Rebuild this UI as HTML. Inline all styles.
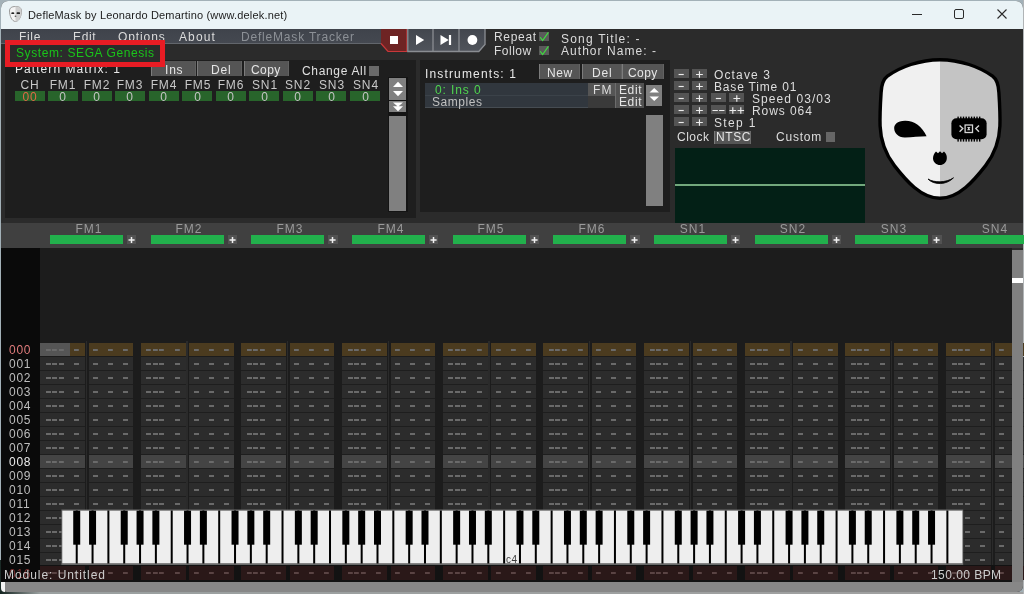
<!DOCTYPE html><html><head><meta charset="utf-8"><style>
*{margin:0;padding:0;box-sizing:border-box}
html,body{width:1024px;height:594px;overflow:hidden}
body{background:#a3b1b8;position:relative;font-family:"Liberation Sans",sans-serif}
div{position:absolute}
.t{white-space:pre;will-change:transform}
svg{position:absolute;overflow:visible}
</style></head><body>
<div style="left:0px;top:560px;width:10px;height:34px;background:linear-gradient(90deg,#1a2a26,#2a3a36);"></div>
<div style="left:0px;top:592px;width:1024px;height:2px;background:linear-gradient(90deg,#142420,#9aa0a0 40px,#a0a0a0);"></div>
<div style="left:1023px;top:0px;width:1px;height:594px;background:#b0b4b6;"></div>
<div style="left:1px;top:1px;width:1022px;height:591px;background:#2b2b2b;border-radius:7px 7px 6px 6px"></div>
<div style="left:1px;top:1px;width:1022px;height:28px;background:#eaf3f6;border-radius:7px 7px 0 0"></div>
<svg style="left:9px;top:6px" width="13" height="16" viewBox="0 0 13 16">
<path d="M6.5 0.5 C10.5 0.5 12.5 2 12.5 5 C12.5 10 10 15.5 6.5 15.5 C3 15.5 0.5 10 0.5 5 C0.5 2 2.5 0.5 6.5 0.5Z" fill="#f4f4f4" stroke="#9a9a9a" stroke-width="1"/>
<path d="M6.5 0.5 C10.5 0.5 12.5 2 12.5 5 C12.5 10 10 15.5 6.5 15.5Z" fill="#cfcfcf"/>
<ellipse cx="3.8" cy="7.2" rx="1.6" ry="0.9" fill="#222"/><rect x="7.6" y="6.3" width="3.4" height="1.8" rx="0.6" fill="#222"/>
<ellipse cx="6.5" cy="10.3" rx="0.9" ry="0.8" fill="#555"/></svg>
<div class="t" style="left:28px;top:8.79px;font-size:11px;line-height:12.65px;color:#1c1c1c;letter-spacing:0.17px;font-family:"Liberation Sans", sans-serif;">DefleMask by Leonardo Demartino (www.delek.net)</div>
<div style="left:912px;top:14px;width:10px;height:1px;background:#2a2a2a;"></div>
<div style="left:954px;top:9px;width:10px;height:10px;background:transparent;border:1px solid #2a2a2a;border-radius:2px"></div>
<svg style="left:997px;top:9px" width="10" height="10" viewBox="0 0 10 10"><path d="M0.5 0.5L9.5 9.5M9.5 0.5L0.5 9.5" stroke="#2a2a2a" stroke-width="1.1"/></svg>
<div style="left:1px;top:29px;width:380px;height:15px;background:linear-gradient(#3f434b,#454951);"></div>
<div style="left:1px;top:43px;width:380px;height:1px;background:#62666c;"></div>
<div class="t" style="left:19px;top:31.04px;font-size:12px;line-height:13.8px;color:#dcdcdc;letter-spacing:0.67px;font-family:"Liberation Sans", sans-serif;">File</div>
<div class="t" style="left:73px;top:31.04px;font-size:12px;line-height:13.8px;color:#dcdcdc;letter-spacing:0.67px;font-family:"Liberation Sans", sans-serif;">Edit</div>
<div class="t" style="left:118px;top:31.04px;font-size:12px;line-height:13.8px;color:#dcdcdc;letter-spacing:0.9px;font-family:"Liberation Sans", sans-serif;">Options</div>
<div class="t" style="left:178.6px;top:31.04px;font-size:12px;line-height:13.8px;color:#dcdcdc;letter-spacing:1.1px;font-family:"Liberation Sans", sans-serif;">About</div>
<div class="t" style="left:240.75px;top:31.04px;font-size:12px;line-height:13.8px;color:#8c9096;letter-spacing:0.81px;font-family:"Liberation Sans", sans-serif;">DefleMask Tracker</div>
<svg style="left:381px;top:29px" width="106" height="24" viewBox="0 0 106 24">
<path d="M0 0H26.3V23H7L0 15Z" fill="#6e2424"/>
<path d="M0 14.5L7 22.5H26V0" fill="none" stroke="#c8383a" stroke-width="1.2"/>
<rect x="9" y="7" width="8" height="8" fill="#fff"/>
<path d="M26.3 0H104.2V15.5L97.8 23H26.3Z" fill="url(#g1)"/>
<path d="M26.8 0V22.5H97.8L104 15.5V0M52 0V22.5M78 0V22.5" fill="none" stroke="#8a8d92" stroke-width="1.3"/>
<path d="M35 6V16L43.2 11Z" fill="#fff"/>
<path d="M59.5 6V16L67.7 11Z" fill="#fff"/><rect x="67.9" y="6" width="2.2" height="10" fill="#fff"/>
<circle cx="91.4" cy="11" r="4.9" fill="#fff"/>
<defs><linearGradient id="g1" x1="0" y1="0" x2="0" y2="1"><stop offset="0" stop-color="#42464e"/><stop offset="1" stop-color="#50545b"/></linearGradient></defs>
</svg>
<div class="t" style="left:493.5px;top:31.14px;font-size:12px;line-height:13.8px;color:#dcdcdc;letter-spacing:0.7px;font-family:"Liberation Sans", sans-serif;">Repeat</div>
<div class="t" style="left:493.5px;top:45.14px;font-size:12px;line-height:13.8px;color:#dcdcdc;letter-spacing:0.5px;font-family:"Liberation Sans", sans-serif;">Follow</div>
<div style="left:539.4px;top:32px;width:9.5px;height:9px;background:#5a5a5a;"></div>
<svg style="left:539px;top:31px" width="11" height="11" viewBox="0 0 11 11"><path d="M1.2 6.2L3.6 9.6L9.4 1.4" fill="none" stroke="#3ee03e" stroke-width="1.1"/></svg>
<div style="left:539.4px;top:46px;width:9.5px;height:9px;background:#5a5a5a;"></div>
<svg style="left:539px;top:45px" width="11" height="11" viewBox="0 0 11 11"><path d="M1.2 6.2L3.6 9.6L9.4 1.4" fill="none" stroke="#3ee03e" stroke-width="1.1"/></svg>
<div class="t" style="left:560.6px;top:32.64px;font-size:12px;line-height:13.8px;color:#dcdcdc;letter-spacing:1.21px;font-family:"Liberation Sans", sans-serif;">Song Title: -</div>
<div class="t" style="left:560.6px;top:45.14px;font-size:12px;line-height:13.8px;color:#dcdcdc;letter-spacing:1.04px;font-family:"Liberation Sans", sans-serif;">Author Name: -</div>
<div style="left:5px;top:60px;width:411px;height:157.5px;background:#1e1e1e;"></div>
<div class="t" style="left:14.6px;top:63.24px;font-size:12px;line-height:13.8px;color:#e8e8e8;letter-spacing:1.06px;font-family:"Liberation Sans", sans-serif;">Pattern Matrix: 1</div>
<div style="left:151px;top:61.3px;width:45px;height:15px;background:#555555;border-left:1px solid #7c7c7c;border-right:1px solid #626262"></div>
<div class="t" style="left:165px;top:63.94px;font-size:12px;line-height:13.8px;color:#e6e6e6;letter-spacing:0.8px;font-family:"Liberation Sans", sans-serif;">Ins</div>
<div style="left:197px;top:61.3px;width:45px;height:15px;background:#555555;border-left:1px solid #7c7c7c;border-right:1px solid #626262"></div>
<div class="t" style="left:211px;top:63.94px;font-size:12px;line-height:13.8px;color:#e6e6e6;letter-spacing:0.8px;font-family:"Liberation Sans", sans-serif;">Del</div>
<div style="left:243.5px;top:61.3px;width:45.5px;height:15px;background:#555555;border-left:1px solid #7c7c7c;border-right:1px solid #626262"></div>
<div class="t" style="left:250.5px;top:63.94px;font-size:12px;line-height:13.8px;color:#e6e6e6;letter-spacing:0.4px;font-family:"Liberation Sans", sans-serif;">Copy</div>
<div class="t" style="left:301.6px;top:64.74px;font-size:12px;line-height:13.8px;color:#e0e0e0;letter-spacing:0.67px;font-family:"Liberation Sans", sans-serif;">Change All</div>
<div style="left:369px;top:66px;width:9.5px;height:9.5px;background:#6a6a6a;"></div>
<div class="t" style="left:9.75px;top:78.64px;width:40px;text-align:center;font-size:12px;line-height:13.8px;color:#c8c8c8;letter-spacing:0.9px">CH</div>
<div style="left:14.8px;top:91.4px;width:29.8px;height:9.5px;background:#28642b;"></div>
<div class="t" style="left:9.75px;top:90.74px;width:40px;text-align:center;font-size:12px;line-height:13.8px;color:#e06848;letter-spacing:0.9px">00</div>
<div class="t" style="left:43.33px;top:78.64px;width:40px;text-align:center;font-size:12px;line-height:13.8px;color:#c8c8c8;letter-spacing:0.9px">FM1</div>
<div style="left:48.32px;top:91.4px;width:29.8px;height:9.5px;background:#28642b;"></div>
<div class="t" style="left:43.33px;top:90.74px;width:40px;text-align:center;font-size:12px;line-height:13.8px;color:#c4c4c4;letter-spacing:0.9px">0</div>
<div class="t" style="left:76.91px;top:78.64px;width:40px;text-align:center;font-size:12px;line-height:13.8px;color:#c8c8c8;letter-spacing:0.9px">FM2</div>
<div style="left:81.84px;top:91.4px;width:29.8px;height:9.5px;background:#28642b;"></div>
<div class="t" style="left:76.91px;top:90.74px;width:40px;text-align:center;font-size:12px;line-height:13.8px;color:#c4c4c4;letter-spacing:0.9px">0</div>
<div class="t" style="left:110.49px;top:78.64px;width:40px;text-align:center;font-size:12px;line-height:13.8px;color:#c8c8c8;letter-spacing:0.9px">FM3</div>
<div style="left:115.36px;top:91.4px;width:29.8px;height:9.5px;background:#28642b;"></div>
<div class="t" style="left:110.49px;top:90.74px;width:40px;text-align:center;font-size:12px;line-height:13.8px;color:#c4c4c4;letter-spacing:0.9px">0</div>
<div class="t" style="left:144.07px;top:78.64px;width:40px;text-align:center;font-size:12px;line-height:13.8px;color:#c8c8c8;letter-spacing:0.9px">FM4</div>
<div style="left:148.88px;top:91.4px;width:29.8px;height:9.5px;background:#28642b;"></div>
<div class="t" style="left:144.07px;top:90.74px;width:40px;text-align:center;font-size:12px;line-height:13.8px;color:#c4c4c4;letter-spacing:0.9px">0</div>
<div class="t" style="left:177.65px;top:78.64px;width:40px;text-align:center;font-size:12px;line-height:13.8px;color:#c8c8c8;letter-spacing:0.9px">FM5</div>
<div style="left:182.4px;top:91.4px;width:29.8px;height:9.5px;background:#28642b;"></div>
<div class="t" style="left:177.65px;top:90.74px;width:40px;text-align:center;font-size:12px;line-height:13.8px;color:#c4c4c4;letter-spacing:0.9px">0</div>
<div class="t" style="left:211.23px;top:78.64px;width:40px;text-align:center;font-size:12px;line-height:13.8px;color:#c8c8c8;letter-spacing:0.9px">FM6</div>
<div style="left:215.92px;top:91.4px;width:29.8px;height:9.5px;background:#28642b;"></div>
<div class="t" style="left:211.23px;top:90.74px;width:40px;text-align:center;font-size:12px;line-height:13.8px;color:#c4c4c4;letter-spacing:0.9px">0</div>
<div class="t" style="left:244.81px;top:78.64px;width:40px;text-align:center;font-size:12px;line-height:13.8px;color:#c8c8c8;letter-spacing:0.9px">SN1</div>
<div style="left:249.44px;top:91.4px;width:29.8px;height:9.5px;background:#28642b;"></div>
<div class="t" style="left:244.81px;top:90.74px;width:40px;text-align:center;font-size:12px;line-height:13.8px;color:#c4c4c4;letter-spacing:0.9px">0</div>
<div class="t" style="left:278.39px;top:78.64px;width:40px;text-align:center;font-size:12px;line-height:13.8px;color:#c8c8c8;letter-spacing:0.9px">SN2</div>
<div style="left:282.96px;top:91.4px;width:29.8px;height:9.5px;background:#28642b;"></div>
<div class="t" style="left:278.39px;top:90.74px;width:40px;text-align:center;font-size:12px;line-height:13.8px;color:#c4c4c4;letter-spacing:0.9px">0</div>
<div class="t" style="left:311.97px;top:78.64px;width:40px;text-align:center;font-size:12px;line-height:13.8px;color:#c8c8c8;letter-spacing:0.9px">SN3</div>
<div style="left:316.48px;top:91.4px;width:29.8px;height:9.5px;background:#28642b;"></div>
<div class="t" style="left:311.97px;top:90.74px;width:40px;text-align:center;font-size:12px;line-height:13.8px;color:#c4c4c4;letter-spacing:0.9px">0</div>
<div class="t" style="left:345.55px;top:78.64px;width:40px;text-align:center;font-size:12px;line-height:13.8px;color:#c8c8c8;letter-spacing:0.9px">SN4</div>
<div style="left:350.0px;top:91.4px;width:29.8px;height:9.5px;background:#28642b;"></div>
<div class="t" style="left:345.55px;top:90.74px;width:40px;text-align:center;font-size:12px;line-height:13.8px;color:#c4c4c4;letter-spacing:0.9px">0</div>
<div style="left:388px;top:77px;width:19.5px;height:135px;background:#141414;"></div>
<div style="left:389.3px;top:78px;width:17px;height:21.7px;background:#808080;"></div>
<div style="left:389.3px;top:101px;width:17px;height:10.8px;background:#808080;"></div>
<div style="left:389.3px;top:115.6px;width:17px;height:95px;background:#808080;"></div>
<svg style="left:389px;top:78px" width="18" height="34" viewBox="0 0 18 34">
<path d="M4 8.9H14L9 3.7Z M4 13H14L9 18.2Z" fill="#fff"/>
<path d="M4 24.5H14L9 28.8Z M4 28.3H14L9 33.2Z" fill="#fff"/></svg>
<div style="left:419.5px;top:60px;width:250.5px;height:152.3px;background:#1e1e1e;"></div>
<div class="t" style="left:424.5px;top:67.64px;font-size:12px;line-height:13.8px;color:#e8e8e8;letter-spacing:1.15px;font-family:"Liberation Sans", sans-serif;">Instruments: 1</div>
<div style="left:539.4px;top:64.4px;width:41px;height:14.8px;background:#555555;border-left:1px solid #7c7c7c;border-right:1px solid #626262"></div>
<div class="t" style="left:547px;top:66.64px;font-size:12px;line-height:13.8px;color:#e6e6e6;letter-spacing:0.6px;font-family:"Liberation Sans", sans-serif;">New</div>
<div style="left:581.5px;top:64.4px;width:40.5px;height:14.8px;background:#555555;border-left:1px solid #7c7c7c;border-right:1px solid #626262"></div>
<div class="t" style="left:592px;top:66.64px;font-size:12px;line-height:13.8px;color:#e6e6e6;letter-spacing:0.8px;font-family:"Liberation Sans", sans-serif;">Del</div>
<div style="left:622.3px;top:64.4px;width:42.2px;height:14.8px;background:#555555;border-left:1px solid #7c7c7c;border-right:1px solid #626262"></div>
<div class="t" style="left:627.5px;top:66.64px;font-size:12px;line-height:13.8px;color:#e6e6e6;letter-spacing:0.4px;font-family:"Liberation Sans", sans-serif;">Copy</div>
<div style="left:425px;top:83px;width:163.3px;height:25px;background:#31373e;"></div>
<div style="left:425px;top:94.5px;width:163.3px;height:1px;background:#3b4249;"></div>
<div style="left:425px;top:107px;width:163.3px;height:1px;background:#464c52;"></div>
<div class="t" style="left:434.5px;top:83.89px;font-size:12px;line-height:13.8px;color:#4fd54f;letter-spacing:0.9px;font-family:"Liberation Sans", sans-serif;">0: Ins 0</div>
<div class="t" style="left:431.5px;top:96.14px;font-size:12px;line-height:13.8px;color:#c0c0c0;letter-spacing:0.55px;font-family:"Liberation Sans", sans-serif;">Samples</div>
<div style="left:588.3px;top:83.2px;width:27px;height:12.7px;background:#555555;"></div>
<div style="left:588.3px;top:95.9px;width:27px;height:12px;background:#3a3a3a;"></div>
<div class="t" style="left:592.5px;top:84.14px;font-size:12px;line-height:13.8px;color:#dedede;letter-spacing:1.2px;font-family:"Liberation Sans", sans-serif;">FM</div>
<div style="left:615.2px;top:83.2px;width:28.8px;height:24.6px;background:#515151;border-left:1px solid #6c6c6c"></div>
<div class="t" style="left:618.5px;top:83.94px;font-size:12px;line-height:13.8px;color:#e6e6e6;letter-spacing:0.6px;font-family:"Liberation Sans", sans-serif;">Edit</div>
<div class="t" style="left:618.5px;top:96.44px;font-size:12px;line-height:13.8px;color:#e6e6e6;letter-spacing:0.6px;font-family:"Liberation Sans", sans-serif;">Edit</div>
<div style="left:646px;top:85px;width:16.3px;height:21.1px;background:#808080;"></div>
<svg style="left:646px;top:85px" width="17" height="22" viewBox="0 0 17 22">
<path d="M3.5 7.5H13L8.2 3Z M3.5 11.5H13L8.2 16Z" fill="#fff"/></svg>
<div style="left:646px;top:115px;width:16.5px;height:91px;background:#808080;"></div>
<div style="left:673.75px;top:69px;width:14.85px;height:9.4px;background:#545454;"></div>
<svg style="left:0;top:0" width="1024" height="594"><path d="M678.57 74.50h5.2" stroke="#ececec" stroke-width="1.15" fill="none"/></svg>
<div style="left:692px;top:69px;width:14.9px;height:9.4px;background:#545454;"></div>
<svg style="left:0;top:0" width="1024" height="594"><path d="M696.05 74.50h6.8M699.45 71.20v6.5" stroke="#ececec" stroke-width="1.15" fill="none"/></svg>
<div style="left:673.75px;top:81px;width:14.85px;height:9.4px;background:#545454;"></div>
<svg style="left:0;top:0" width="1024" height="594"><path d="M678.57 86.50h5.2" stroke="#ececec" stroke-width="1.15" fill="none"/></svg>
<div style="left:692px;top:81px;width:14.9px;height:9.4px;background:#545454;"></div>
<svg style="left:0;top:0" width="1024" height="594"><path d="M696.05 86.50h6.8M699.45 83.20v6.5" stroke="#ececec" stroke-width="1.15" fill="none"/></svg>
<div style="left:673.75px;top:93px;width:14.85px;height:9.4px;background:#545454;"></div>
<svg style="left:0;top:0" width="1024" height="594"><path d="M678.57 98.50h5.2" stroke="#ececec" stroke-width="1.15" fill="none"/></svg>
<div style="left:692px;top:93px;width:14.9px;height:9.4px;background:#545454;"></div>
<svg style="left:0;top:0" width="1024" height="594"><path d="M696.05 98.50h6.8M699.45 95.20v6.5" stroke="#ececec" stroke-width="1.15" fill="none"/></svg>
<div style="left:673.75px;top:105px;width:14.85px;height:9.4px;background:#545454;"></div>
<svg style="left:0;top:0" width="1024" height="594"><path d="M678.57 110.50h5.2" stroke="#ececec" stroke-width="1.15" fill="none"/></svg>
<div style="left:692px;top:105px;width:14.9px;height:9.4px;background:#545454;"></div>
<svg style="left:0;top:0" width="1024" height="594"><path d="M696.05 110.50h6.8M699.45 107.20v6.5" stroke="#ececec" stroke-width="1.15" fill="none"/></svg>
<div style="left:673.75px;top:117px;width:14.85px;height:9.4px;background:#545454;"></div>
<svg style="left:0;top:0" width="1024" height="594"><path d="M678.57 122.50h5.2" stroke="#ececec" stroke-width="1.15" fill="none"/></svg>
<div style="left:692px;top:117px;width:14.9px;height:9.4px;background:#545454;"></div>
<svg style="left:0;top:0" width="1024" height="594"><path d="M696.05 122.50h6.8M699.45 119.20v6.5" stroke="#ececec" stroke-width="1.15" fill="none"/></svg>
<div style="left:711px;top:93px;width:14.9px;height:9.4px;background:#545454;"></div>
<svg style="left:0;top:0" width="1024" height="594"><path d="M715.85 98.50h5.2" stroke="#ececec" stroke-width="1.15" fill="none"/></svg>
<div style="left:729.4px;top:93px;width:14.8px;height:9.4px;background:#545454;"></div>
<svg style="left:0;top:0" width="1024" height="594"><path d="M733.40 98.50h6.8M736.80 95.20v6.5" stroke="#ececec" stroke-width="1.15" fill="none"/></svg>
<div style="left:711px;top:105px;width:14.9px;height:9.4px;background:#545454;"></div>
<svg style="left:0;top:0" width="1024" height="594"><path d="M712.45 110.50h5.4M719.05 110.50h5.4" stroke="#ececec" stroke-width="1.15" fill="none"/></svg>
<div style="left:729.4px;top:105px;width:14.8px;height:9.4px;background:#545454;"></div>
<svg style="left:0;top:0" width="1024" height="594"><path d="M729.50 110.50h6.6M737.50 110.50h6.6M732.80 107.20v6.5M740.80 107.20v6.5" stroke="#ececec" stroke-width="1.15" fill="none"/></svg>
<div class="t" style="left:714px;top:68.64px;font-size:12px;line-height:13.8px;color:#dedede;letter-spacing:1.14px;font-family:"Liberation Sans", sans-serif;">Octave 3</div>
<div class="t" style="left:714px;top:80.64px;font-size:12px;line-height:13.8px;color:#dedede;letter-spacing:0.82px;font-family:"Liberation Sans", sans-serif;">Base Time 01</div>
<div class="t" style="left:751.5px;top:92.64px;font-size:12px;line-height:13.8px;color:#dedede;letter-spacing:1.07px;font-family:"Liberation Sans", sans-serif;">Speed 03/03</div>
<div class="t" style="left:751.5px;top:104.64px;font-size:12px;line-height:13.8px;color:#dedede;letter-spacing:0.93px;font-family:"Liberation Sans", sans-serif;">Rows 064</div>
<div class="t" style="left:714px;top:116.64px;font-size:12px;line-height:13.8px;color:#dedede;letter-spacing:1.35px;font-family:"Liberation Sans", sans-serif;">Step 1</div>
<div class="t" style="left:676.5px;top:130.74px;font-size:12px;line-height:13.8px;color:#dedede;letter-spacing:0.5px;font-family:"Liberation Sans", sans-serif;">Clock</div>
<div style="left:714px;top:130.6px;width:37px;height:13px;background:#555555;border-left:1px solid #7a7a7a;border-right:1px solid #6a6a6a"></div>
<div class="t" style="left:716px;top:130.74px;font-size:12px;line-height:13.8px;color:#e6e6e6;letter-spacing:0.6px;font-family:"Liberation Sans", sans-serif;">NTSC</div>
<div class="t" style="left:776px;top:130.74px;font-size:12px;line-height:13.8px;color:#dedede;letter-spacing:0.8px;font-family:"Liberation Sans", sans-serif;">Custom</div>
<div style="left:825.5px;top:132px;width:9.5px;height:10px;background:#666666;"></div>
<div style="left:674.5px;top:148px;width:190.5px;height:75px;background:#032016;"></div>
<div style="left:674.5px;top:184px;width:190.5px;height:2px;background:#72a87c;"></div>
<svg style="left:0;top:0" width="1024" height="594" viewBox="0 0 1024 594">
<defs><clipPath id="mc"><path d="M940 59.7C920 59.7 900 67 887.4 76.2C883 79.5 881.5 84 881.1 92.6C880.3 105 879.8 118 880.1 126C880.6 140 884 152 894.4 165.6C906 180.5 921 198.3 940 198.3C959 198.3 974 180.5 985.6 165.6C996 152 999.4 140 999.9 126C1000.2 118 999.7 105 998.9 92.6C998.5 84 997 79.5 992.6 76.2C980 67 960 59.7 940 59.7Z"/></clipPath></defs>
<path d="M940 59.7C920 59.7 900 67 887.4 76.2C883 79.5 881.5 84 881.1 92.6C880.3 105 879.8 118 880.1 126C880.6 140 884 152 894.4 165.6C906 180.5 921 198.3 940 198.3C959 198.3 974 180.5 985.6 165.6C996 152 999.4 140 999.9 126C1000.2 118 999.7 105 998.9 92.6C998.5 84 997 79.5 992.6 76.2C980 67 960 59.7 940 59.7Z" fill="#f0f0f0"/>
<rect x="940" y="50" width="70" height="160" fill="#c4c4c4" clip-path="url(#mc)"/>
<path d="M940 59.7C920 59.7 900 67 887.4 76.2C883 79.5 881.5 84 881.1 92.6C880.3 105 879.8 118 880.1 126C880.6 140 884 152 894.4 165.6C906 180.5 921 198.3 940 198.3C959 198.3 974 180.5 985.6 165.6C996 152 999.4 140 999.9 126C1000.2 118 999.7 105 998.9 92.6C998.5 84 997 79.5 992.6 76.2C980 67 960 59.7 940 59.7Z" fill="none" stroke="#000" stroke-width="3.4"/>
<path d="M926.6 136.3C922 126 914 120.5 905 120.7C897 120.9 894 124.5 894.2 128.5C894.4 133 898 137.5 905 137.4C912 137.3 920 136.5 926.6 136.3Z" fill="#000"/>
<rect x="957.40" y="116.6" width="1.4" height="25" fill="#000"/><rect x="960.10" y="116.6" width="1.4" height="25" fill="#000"/><rect x="962.80" y="116.6" width="1.4" height="25" fill="#000"/><rect x="965.50" y="116.6" width="1.4" height="25" fill="#000"/><rect x="968.20" y="116.6" width="1.4" height="25" fill="#000"/><rect x="970.90" y="116.6" width="1.4" height="25" fill="#000"/><rect x="973.60" y="116.6" width="1.4" height="25" fill="#000"/><rect x="976.30" y="116.6" width="1.4" height="25" fill="#000"/><rect x="979.00" y="116.6" width="1.4" height="25" fill="#000"/>
<rect x="951.4" y="118.3" width="35.2" height="20.9" rx="5" fill="#000"/>
<rect x="965.1" y="125" width="7.4" height="7.5" fill="none" stroke="#d4d4d4" stroke-width="1.3"/>
<path d="M967 127h3.5l-1.2 1.6l1.2 1.6h-3.5l1.2-1.6z" fill="#d4d4d4"/>
<path d="M959.6 125.4L962.8 128.6L959.6 131.8M979 125.4L975.8 128.6L979 131.8" fill="none" stroke="#d4d4d4" stroke-width="1.4"/>
<path d="M936 151.5L938 153.2L940 151.2L942 153.2L944 151.5C946.5 153.5 947 156.5 946.8 158.5C946.5 162.5 943.5 165 940 165C936.5 165 933.3 162.5 933 158.5C933 156 934 153 936 151.5Z" fill="#000"/>
<path d="M928 179C934 182.8 946 183 953.5 177.8C947 185 934 185.5 928 179Z" fill="#000" stroke="#000" stroke-width="0.8"/>
</svg>
<div style="left:1px;top:223px;width:1022px;height:25px;background:#404040;"></div>
<div style="left:50.0px;top:235px;width:73px;height:9.2px;background:#22b04c;"></div>
<div style="left:127.0px;top:235px;width:9.2px;height:9.2px;background:#525252;"></div>
<svg style="left:127.00px;top:235px" width="10" height="10" viewBox="0 0 10 10"><path d="M4.5 1.9V8M1.5 4.95H7.6" stroke="#f0f0f0" stroke-width="1.5"/></svg>
<div class="t" style="left:58.80px;top:223.34px;width:60px;text-align:center;font-size:12px;line-height:13.8px;color:#9a9a9a;letter-spacing:1.0px">FM1</div>
<div style="left:150.67px;top:235px;width:73px;height:9.2px;background:#22b04c;"></div>
<div style="left:227.67px;top:235px;width:9.2px;height:9.2px;background:#525252;"></div>
<svg style="left:227.67px;top:235px" width="10" height="10" viewBox="0 0 10 10"><path d="M4.5 1.9V8M1.5 4.95H7.6" stroke="#f0f0f0" stroke-width="1.5"/></svg>
<div class="t" style="left:159.47px;top:223.34px;width:60px;text-align:center;font-size:12px;line-height:13.8px;color:#9a9a9a;letter-spacing:1.0px">FM2</div>
<div style="left:251.34px;top:235px;width:73px;height:9.2px;background:#22b04c;"></div>
<div style="left:328.34px;top:235px;width:9.2px;height:9.2px;background:#525252;"></div>
<svg style="left:328.34px;top:235px" width="10" height="10" viewBox="0 0 10 10"><path d="M4.5 1.9V8M1.5 4.95H7.6" stroke="#f0f0f0" stroke-width="1.5"/></svg>
<div class="t" style="left:260.14px;top:223.34px;width:60px;text-align:center;font-size:12px;line-height:13.8px;color:#9a9a9a;letter-spacing:1.0px">FM3</div>
<div style="left:352.01px;top:235px;width:73px;height:9.2px;background:#22b04c;"></div>
<div style="left:429.01px;top:235px;width:9.2px;height:9.2px;background:#525252;"></div>
<svg style="left:429.01px;top:235px" width="10" height="10" viewBox="0 0 10 10"><path d="M4.5 1.9V8M1.5 4.95H7.6" stroke="#f0f0f0" stroke-width="1.5"/></svg>
<div class="t" style="left:360.81px;top:223.34px;width:60px;text-align:center;font-size:12px;line-height:13.8px;color:#9a9a9a;letter-spacing:1.0px">FM4</div>
<div style="left:452.68px;top:235px;width:73px;height:9.2px;background:#22b04c;"></div>
<div style="left:529.68px;top:235px;width:9.2px;height:9.2px;background:#525252;"></div>
<svg style="left:529.68px;top:235px" width="10" height="10" viewBox="0 0 10 10"><path d="M4.5 1.9V8M1.5 4.95H7.6" stroke="#f0f0f0" stroke-width="1.5"/></svg>
<div class="t" style="left:461.48px;top:223.34px;width:60px;text-align:center;font-size:12px;line-height:13.8px;color:#9a9a9a;letter-spacing:1.0px">FM5</div>
<div style="left:553.35px;top:235px;width:73px;height:9.2px;background:#22b04c;"></div>
<div style="left:630.35px;top:235px;width:9.2px;height:9.2px;background:#525252;"></div>
<svg style="left:630.35px;top:235px" width="10" height="10" viewBox="0 0 10 10"><path d="M4.5 1.9V8M1.5 4.95H7.6" stroke="#f0f0f0" stroke-width="1.5"/></svg>
<div class="t" style="left:562.15px;top:223.34px;width:60px;text-align:center;font-size:12px;line-height:13.8px;color:#9a9a9a;letter-spacing:1.0px">FM6</div>
<div style="left:654.02px;top:235px;width:73px;height:9.2px;background:#22b04c;"></div>
<div style="left:731.02px;top:235px;width:9.2px;height:9.2px;background:#525252;"></div>
<svg style="left:731.02px;top:235px" width="10" height="10" viewBox="0 0 10 10"><path d="M4.5 1.9V8M1.5 4.95H7.6" stroke="#f0f0f0" stroke-width="1.5"/></svg>
<div class="t" style="left:662.82px;top:223.34px;width:60px;text-align:center;font-size:12px;line-height:13.8px;color:#9a9a9a;letter-spacing:1.0px">SN1</div>
<div style="left:754.69px;top:235px;width:73px;height:9.2px;background:#22b04c;"></div>
<div style="left:831.69px;top:235px;width:9.2px;height:9.2px;background:#525252;"></div>
<svg style="left:831.69px;top:235px" width="10" height="10" viewBox="0 0 10 10"><path d="M4.5 1.9V8M1.5 4.95H7.6" stroke="#f0f0f0" stroke-width="1.5"/></svg>
<div class="t" style="left:763.49px;top:223.34px;width:60px;text-align:center;font-size:12px;line-height:13.8px;color:#9a9a9a;letter-spacing:1.0px">SN2</div>
<div style="left:855.36px;top:235px;width:73px;height:9.2px;background:#22b04c;"></div>
<div style="left:932.36px;top:235px;width:9.2px;height:9.2px;background:#525252;"></div>
<svg style="left:932.36px;top:235px" width="10" height="10" viewBox="0 0 10 10"><path d="M4.5 1.9V8M1.5 4.95H7.6" stroke="#f0f0f0" stroke-width="1.5"/></svg>
<div class="t" style="left:864.16px;top:223.34px;width:60px;text-align:center;font-size:12px;line-height:13.8px;color:#9a9a9a;letter-spacing:1.0px">SN3</div>
<div style="left:956.03px;top:235px;width:73px;height:9.2px;background:#22b04c;"></div>
<div style="left:1033.03px;top:235px;width:9.2px;height:9.2px;background:#525252;"></div>
<svg style="left:1033.03px;top:235px" width="10" height="10" viewBox="0 0 10 10"><path d="M4.5 1.9V8M1.5 4.95H7.6" stroke="#f0f0f0" stroke-width="1.5"/></svg>
<div class="t" style="left:964.83px;top:223.34px;width:60px;text-align:center;font-size:12px;line-height:13.8px;color:#9a9a9a;letter-spacing:1.0px">SN4</div>
<div style="left:1px;top:248px;width:1011px;height:334px;background:#1c1c1c;"></div>
<div style="left:1px;top:248px;width:39px;height:334px;background:#0a0a0a;"></div>
<div class="t" style="left:8.75px;top:344.34px;font-size:12px;line-height:13.8px;color:#e07c7c;letter-spacing:0.75px">000</div>
<div class="t" style="left:8.75px;top:358.34px;font-size:12px;line-height:13.8px;color:#bdbdbd;letter-spacing:0.75px">001</div>
<div class="t" style="left:8.75px;top:372.34px;font-size:12px;line-height:13.8px;color:#bdbdbd;letter-spacing:0.75px">002</div>
<div class="t" style="left:8.75px;top:386.34px;font-size:12px;line-height:13.8px;color:#bdbdbd;letter-spacing:0.75px">003</div>
<div class="t" style="left:8.75px;top:400.34px;font-size:12px;line-height:13.8px;color:#bdbdbd;letter-spacing:0.75px">004</div>
<div class="t" style="left:8.75px;top:414.34px;font-size:12px;line-height:13.8px;color:#bdbdbd;letter-spacing:0.75px">005</div>
<div class="t" style="left:8.75px;top:428.34px;font-size:12px;line-height:13.8px;color:#bdbdbd;letter-spacing:0.75px">006</div>
<div class="t" style="left:8.75px;top:442.34px;font-size:12px;line-height:13.8px;color:#bdbdbd;letter-spacing:0.75px">007</div>
<div class="t" style="left:8.75px;top:456.34px;font-size:12px;line-height:13.8px;color:#ececec;letter-spacing:0.75px">008</div>
<div class="t" style="left:8.75px;top:470.34px;font-size:12px;line-height:13.8px;color:#bdbdbd;letter-spacing:0.75px">009</div>
<div class="t" style="left:8.75px;top:484.34px;font-size:12px;line-height:13.8px;color:#bdbdbd;letter-spacing:0.75px">010</div>
<div class="t" style="left:8.75px;top:498.34px;font-size:12px;line-height:13.8px;color:#bdbdbd;letter-spacing:0.75px">011</div>
<div class="t" style="left:8.75px;top:512.34px;font-size:12px;line-height:13.8px;color:#bdbdbd;letter-spacing:0.75px">012</div>
<div class="t" style="left:8.75px;top:526.34px;font-size:12px;line-height:13.8px;color:#bdbdbd;letter-spacing:0.75px">013</div>
<div class="t" style="left:8.75px;top:540.34px;font-size:12px;line-height:13.8px;color:#bdbdbd;letter-spacing:0.75px">014</div>
<div class="t" style="left:8.75px;top:554.34px;font-size:12px;line-height:13.8px;color:#bdbdbd;letter-spacing:0.75px">015</div>
<div class="t" style="left:8.75px;top:568.34px;font-size:12px;line-height:13.8px;color:#8a3a3a;letter-spacing:0.75px">016</div>
<div style="left:85.8px;top:341px;width:1.2px;height:241px;background:#2a2a2a;"></div>
<div style="left:40.00px;top:357px;width:45px;height:210px;background:linear-gradient(transparent 6px,#6a6a6a 6px,#6a6a6a 8px,transparent 8px) 5.60px 0/4.8px 14px repeat-y,linear-gradient(transparent 6px,#6a6a6a 6px,#6a6a6a 8px,transparent 8px) 12.00px 0/4.8px 14px repeat-y,linear-gradient(transparent 6px,#6a6a6a 6px,#6a6a6a 8px,transparent 8px) 18.50px 0/4.8px 14px repeat-y,linear-gradient(transparent 6px,#6a6a6a 6px,#6a6a6a 8px,transparent 8px) 34.20px 0/4.8px 14px repeat-y,linear-gradient(#2c2c2c 13px,#1e1e1e 13px) 0 0/100% 14px repeat-y"></div>
<div style="left:88.70px;top:357px;width:44.4px;height:210px;background:linear-gradient(transparent 6px,#6a6a6a 6px,#6a6a6a 8px,transparent 8px) 4.30px 0/4.8px 14px repeat-y,linear-gradient(transparent 6px,#6a6a6a 6px,#6a6a6a 8px,transparent 8px) 19.30px 0/4.8px 14px repeat-y,linear-gradient(transparent 6px,#6a6a6a 6px,#6a6a6a 8px,transparent 8px) 34.30px 0/4.8px 14px repeat-y,linear-gradient(#2c2c2c 13px,#1e1e1e 13px) 0 0/100% 14px repeat-y"></div>
<div style="left:40.00px;top:343px;width:45px;height:13px;background:linear-gradient(#6a6a6a,#6a6a6a) 5.60px 6px/4.8px 2px no-repeat,linear-gradient(#6a6a6a,#6a6a6a) 12.00px 6px/4.8px 2px no-repeat,linear-gradient(#6a6a6a,#6a6a6a) 18.50px 6px/4.8px 2px no-repeat,linear-gradient(#6a6a6a,#6a6a6a) 34.20px 6px/4.8px 2px no-repeat,linear-gradient(90deg,#555555 30px,#4b3b1f 30px)"></div>
<div style="left:88.70px;top:343px;width:44.4px;height:13px;background:linear-gradient(#6a6a6a,#6a6a6a) 4.30px 6px/4.8px 2px no-repeat,linear-gradient(#6a6a6a,#6a6a6a) 19.30px 6px/4.8px 2px no-repeat,linear-gradient(#6a6a6a,#6a6a6a) 34.30px 6px/4.8px 2px no-repeat,#4b3b1f"></div>
<div style="left:40.00px;top:455px;width:45px;height:13px;background:linear-gradient(#6a6a6a,#6a6a6a) 5.60px 6px/4.8px 2px no-repeat,linear-gradient(#6a6a6a,#6a6a6a) 12.00px 6px/4.8px 2px no-repeat,linear-gradient(#6a6a6a,#6a6a6a) 18.50px 6px/4.8px 2px no-repeat,linear-gradient(#6a6a6a,#6a6a6a) 34.20px 6px/4.8px 2px no-repeat,#444444"></div>
<div style="left:88.70px;top:455px;width:44.4px;height:13px;background:linear-gradient(#6a6a6a,#6a6a6a) 4.30px 6px/4.8px 2px no-repeat,linear-gradient(#6a6a6a,#6a6a6a) 19.30px 6px/4.8px 2px no-repeat,linear-gradient(#6a6a6a,#6a6a6a) 34.30px 6px/4.8px 2px no-repeat,#444444"></div>
<div style="left:186.47px;top:341px;width:1.2px;height:241px;background:#2a2a2a;"></div>
<div style="left:140.67px;top:357px;width:45px;height:210px;background:linear-gradient(transparent 6px,#6a6a6a 6px,#6a6a6a 8px,transparent 8px) 5.60px 0/4.8px 14px repeat-y,linear-gradient(transparent 6px,#6a6a6a 6px,#6a6a6a 8px,transparent 8px) 12.00px 0/4.8px 14px repeat-y,linear-gradient(transparent 6px,#6a6a6a 6px,#6a6a6a 8px,transparent 8px) 18.50px 0/4.8px 14px repeat-y,linear-gradient(transparent 6px,#6a6a6a 6px,#6a6a6a 8px,transparent 8px) 34.20px 0/4.8px 14px repeat-y,linear-gradient(#2c2c2c 13px,#1e1e1e 13px) 0 0/100% 14px repeat-y"></div>
<div style="left:189.37px;top:357px;width:44.4px;height:210px;background:linear-gradient(transparent 6px,#6a6a6a 6px,#6a6a6a 8px,transparent 8px) 4.30px 0/4.8px 14px repeat-y,linear-gradient(transparent 6px,#6a6a6a 6px,#6a6a6a 8px,transparent 8px) 19.30px 0/4.8px 14px repeat-y,linear-gradient(transparent 6px,#6a6a6a 6px,#6a6a6a 8px,transparent 8px) 34.30px 0/4.8px 14px repeat-y,linear-gradient(#2c2c2c 13px,#1e1e1e 13px) 0 0/100% 14px repeat-y"></div>
<div style="left:140.67px;top:343px;width:45px;height:13px;background:linear-gradient(#6a6a6a,#6a6a6a) 5.60px 6px/4.8px 2px no-repeat,linear-gradient(#6a6a6a,#6a6a6a) 12.00px 6px/4.8px 2px no-repeat,linear-gradient(#6a6a6a,#6a6a6a) 18.50px 6px/4.8px 2px no-repeat,linear-gradient(#6a6a6a,#6a6a6a) 34.20px 6px/4.8px 2px no-repeat,#4b3b1f"></div>
<div style="left:189.37px;top:343px;width:44.4px;height:13px;background:linear-gradient(#6a6a6a,#6a6a6a) 4.30px 6px/4.8px 2px no-repeat,linear-gradient(#6a6a6a,#6a6a6a) 19.30px 6px/4.8px 2px no-repeat,linear-gradient(#6a6a6a,#6a6a6a) 34.30px 6px/4.8px 2px no-repeat,#4b3b1f"></div>
<div style="left:140.67px;top:455px;width:45px;height:13px;background:linear-gradient(#6a6a6a,#6a6a6a) 5.60px 6px/4.8px 2px no-repeat,linear-gradient(#6a6a6a,#6a6a6a) 12.00px 6px/4.8px 2px no-repeat,linear-gradient(#6a6a6a,#6a6a6a) 18.50px 6px/4.8px 2px no-repeat,linear-gradient(#6a6a6a,#6a6a6a) 34.20px 6px/4.8px 2px no-repeat,#444444"></div>
<div style="left:189.37px;top:455px;width:44.4px;height:13px;background:linear-gradient(#6a6a6a,#6a6a6a) 4.30px 6px/4.8px 2px no-repeat,linear-gradient(#6a6a6a,#6a6a6a) 19.30px 6px/4.8px 2px no-repeat,linear-gradient(#6a6a6a,#6a6a6a) 34.30px 6px/4.8px 2px no-repeat,#444444"></div>
<div style="left:287.14px;top:341px;width:1.2px;height:241px;background:#2a2a2a;"></div>
<div style="left:241.34px;top:357px;width:45px;height:210px;background:linear-gradient(transparent 6px,#6a6a6a 6px,#6a6a6a 8px,transparent 8px) 5.60px 0/4.8px 14px repeat-y,linear-gradient(transparent 6px,#6a6a6a 6px,#6a6a6a 8px,transparent 8px) 12.00px 0/4.8px 14px repeat-y,linear-gradient(transparent 6px,#6a6a6a 6px,#6a6a6a 8px,transparent 8px) 18.50px 0/4.8px 14px repeat-y,linear-gradient(transparent 6px,#6a6a6a 6px,#6a6a6a 8px,transparent 8px) 34.20px 0/4.8px 14px repeat-y,linear-gradient(#2c2c2c 13px,#1e1e1e 13px) 0 0/100% 14px repeat-y"></div>
<div style="left:290.04px;top:357px;width:44.4px;height:210px;background:linear-gradient(transparent 6px,#6a6a6a 6px,#6a6a6a 8px,transparent 8px) 4.30px 0/4.8px 14px repeat-y,linear-gradient(transparent 6px,#6a6a6a 6px,#6a6a6a 8px,transparent 8px) 19.30px 0/4.8px 14px repeat-y,linear-gradient(transparent 6px,#6a6a6a 6px,#6a6a6a 8px,transparent 8px) 34.30px 0/4.8px 14px repeat-y,linear-gradient(#2c2c2c 13px,#1e1e1e 13px) 0 0/100% 14px repeat-y"></div>
<div style="left:241.34px;top:343px;width:45px;height:13px;background:linear-gradient(#6a6a6a,#6a6a6a) 5.60px 6px/4.8px 2px no-repeat,linear-gradient(#6a6a6a,#6a6a6a) 12.00px 6px/4.8px 2px no-repeat,linear-gradient(#6a6a6a,#6a6a6a) 18.50px 6px/4.8px 2px no-repeat,linear-gradient(#6a6a6a,#6a6a6a) 34.20px 6px/4.8px 2px no-repeat,#4b3b1f"></div>
<div style="left:290.04px;top:343px;width:44.4px;height:13px;background:linear-gradient(#6a6a6a,#6a6a6a) 4.30px 6px/4.8px 2px no-repeat,linear-gradient(#6a6a6a,#6a6a6a) 19.30px 6px/4.8px 2px no-repeat,linear-gradient(#6a6a6a,#6a6a6a) 34.30px 6px/4.8px 2px no-repeat,#4b3b1f"></div>
<div style="left:241.34px;top:455px;width:45px;height:13px;background:linear-gradient(#6a6a6a,#6a6a6a) 5.60px 6px/4.8px 2px no-repeat,linear-gradient(#6a6a6a,#6a6a6a) 12.00px 6px/4.8px 2px no-repeat,linear-gradient(#6a6a6a,#6a6a6a) 18.50px 6px/4.8px 2px no-repeat,linear-gradient(#6a6a6a,#6a6a6a) 34.20px 6px/4.8px 2px no-repeat,#444444"></div>
<div style="left:290.04px;top:455px;width:44.4px;height:13px;background:linear-gradient(#6a6a6a,#6a6a6a) 4.30px 6px/4.8px 2px no-repeat,linear-gradient(#6a6a6a,#6a6a6a) 19.30px 6px/4.8px 2px no-repeat,linear-gradient(#6a6a6a,#6a6a6a) 34.30px 6px/4.8px 2px no-repeat,#444444"></div>
<div style="left:387.81px;top:341px;width:1.2px;height:241px;background:#2a2a2a;"></div>
<div style="left:342.01px;top:357px;width:45px;height:210px;background:linear-gradient(transparent 6px,#6a6a6a 6px,#6a6a6a 8px,transparent 8px) 5.60px 0/4.8px 14px repeat-y,linear-gradient(transparent 6px,#6a6a6a 6px,#6a6a6a 8px,transparent 8px) 12.00px 0/4.8px 14px repeat-y,linear-gradient(transparent 6px,#6a6a6a 6px,#6a6a6a 8px,transparent 8px) 18.50px 0/4.8px 14px repeat-y,linear-gradient(transparent 6px,#6a6a6a 6px,#6a6a6a 8px,transparent 8px) 34.20px 0/4.8px 14px repeat-y,linear-gradient(#2c2c2c 13px,#1e1e1e 13px) 0 0/100% 14px repeat-y"></div>
<div style="left:390.71px;top:357px;width:44.4px;height:210px;background:linear-gradient(transparent 6px,#6a6a6a 6px,#6a6a6a 8px,transparent 8px) 4.30px 0/4.8px 14px repeat-y,linear-gradient(transparent 6px,#6a6a6a 6px,#6a6a6a 8px,transparent 8px) 19.30px 0/4.8px 14px repeat-y,linear-gradient(transparent 6px,#6a6a6a 6px,#6a6a6a 8px,transparent 8px) 34.30px 0/4.8px 14px repeat-y,linear-gradient(#2c2c2c 13px,#1e1e1e 13px) 0 0/100% 14px repeat-y"></div>
<div style="left:342.01px;top:343px;width:45px;height:13px;background:linear-gradient(#6a6a6a,#6a6a6a) 5.60px 6px/4.8px 2px no-repeat,linear-gradient(#6a6a6a,#6a6a6a) 12.00px 6px/4.8px 2px no-repeat,linear-gradient(#6a6a6a,#6a6a6a) 18.50px 6px/4.8px 2px no-repeat,linear-gradient(#6a6a6a,#6a6a6a) 34.20px 6px/4.8px 2px no-repeat,#4b3b1f"></div>
<div style="left:390.71px;top:343px;width:44.4px;height:13px;background:linear-gradient(#6a6a6a,#6a6a6a) 4.30px 6px/4.8px 2px no-repeat,linear-gradient(#6a6a6a,#6a6a6a) 19.30px 6px/4.8px 2px no-repeat,linear-gradient(#6a6a6a,#6a6a6a) 34.30px 6px/4.8px 2px no-repeat,#4b3b1f"></div>
<div style="left:342.01px;top:455px;width:45px;height:13px;background:linear-gradient(#6a6a6a,#6a6a6a) 5.60px 6px/4.8px 2px no-repeat,linear-gradient(#6a6a6a,#6a6a6a) 12.00px 6px/4.8px 2px no-repeat,linear-gradient(#6a6a6a,#6a6a6a) 18.50px 6px/4.8px 2px no-repeat,linear-gradient(#6a6a6a,#6a6a6a) 34.20px 6px/4.8px 2px no-repeat,#444444"></div>
<div style="left:390.71px;top:455px;width:44.4px;height:13px;background:linear-gradient(#6a6a6a,#6a6a6a) 4.30px 6px/4.8px 2px no-repeat,linear-gradient(#6a6a6a,#6a6a6a) 19.30px 6px/4.8px 2px no-repeat,linear-gradient(#6a6a6a,#6a6a6a) 34.30px 6px/4.8px 2px no-repeat,#444444"></div>
<div style="left:488.48px;top:341px;width:1.2px;height:241px;background:#2a2a2a;"></div>
<div style="left:442.68px;top:357px;width:45px;height:210px;background:linear-gradient(transparent 6px,#6a6a6a 6px,#6a6a6a 8px,transparent 8px) 5.60px 0/4.8px 14px repeat-y,linear-gradient(transparent 6px,#6a6a6a 6px,#6a6a6a 8px,transparent 8px) 12.00px 0/4.8px 14px repeat-y,linear-gradient(transparent 6px,#6a6a6a 6px,#6a6a6a 8px,transparent 8px) 18.50px 0/4.8px 14px repeat-y,linear-gradient(transparent 6px,#6a6a6a 6px,#6a6a6a 8px,transparent 8px) 34.20px 0/4.8px 14px repeat-y,linear-gradient(#2c2c2c 13px,#1e1e1e 13px) 0 0/100% 14px repeat-y"></div>
<div style="left:491.38px;top:357px;width:44.4px;height:210px;background:linear-gradient(transparent 6px,#6a6a6a 6px,#6a6a6a 8px,transparent 8px) 4.30px 0/4.8px 14px repeat-y,linear-gradient(transparent 6px,#6a6a6a 6px,#6a6a6a 8px,transparent 8px) 19.30px 0/4.8px 14px repeat-y,linear-gradient(transparent 6px,#6a6a6a 6px,#6a6a6a 8px,transparent 8px) 34.30px 0/4.8px 14px repeat-y,linear-gradient(#2c2c2c 13px,#1e1e1e 13px) 0 0/100% 14px repeat-y"></div>
<div style="left:442.68px;top:343px;width:45px;height:13px;background:linear-gradient(#6a6a6a,#6a6a6a) 5.60px 6px/4.8px 2px no-repeat,linear-gradient(#6a6a6a,#6a6a6a) 12.00px 6px/4.8px 2px no-repeat,linear-gradient(#6a6a6a,#6a6a6a) 18.50px 6px/4.8px 2px no-repeat,linear-gradient(#6a6a6a,#6a6a6a) 34.20px 6px/4.8px 2px no-repeat,#4b3b1f"></div>
<div style="left:491.38px;top:343px;width:44.4px;height:13px;background:linear-gradient(#6a6a6a,#6a6a6a) 4.30px 6px/4.8px 2px no-repeat,linear-gradient(#6a6a6a,#6a6a6a) 19.30px 6px/4.8px 2px no-repeat,linear-gradient(#6a6a6a,#6a6a6a) 34.30px 6px/4.8px 2px no-repeat,#4b3b1f"></div>
<div style="left:442.68px;top:455px;width:45px;height:13px;background:linear-gradient(#6a6a6a,#6a6a6a) 5.60px 6px/4.8px 2px no-repeat,linear-gradient(#6a6a6a,#6a6a6a) 12.00px 6px/4.8px 2px no-repeat,linear-gradient(#6a6a6a,#6a6a6a) 18.50px 6px/4.8px 2px no-repeat,linear-gradient(#6a6a6a,#6a6a6a) 34.20px 6px/4.8px 2px no-repeat,#444444"></div>
<div style="left:491.38px;top:455px;width:44.4px;height:13px;background:linear-gradient(#6a6a6a,#6a6a6a) 4.30px 6px/4.8px 2px no-repeat,linear-gradient(#6a6a6a,#6a6a6a) 19.30px 6px/4.8px 2px no-repeat,linear-gradient(#6a6a6a,#6a6a6a) 34.30px 6px/4.8px 2px no-repeat,#444444"></div>
<div style="left:589.15px;top:341px;width:1.2px;height:241px;background:#2a2a2a;"></div>
<div style="left:543.35px;top:357px;width:45px;height:210px;background:linear-gradient(transparent 6px,#6a6a6a 6px,#6a6a6a 8px,transparent 8px) 5.60px 0/4.8px 14px repeat-y,linear-gradient(transparent 6px,#6a6a6a 6px,#6a6a6a 8px,transparent 8px) 12.00px 0/4.8px 14px repeat-y,linear-gradient(transparent 6px,#6a6a6a 6px,#6a6a6a 8px,transparent 8px) 18.50px 0/4.8px 14px repeat-y,linear-gradient(transparent 6px,#6a6a6a 6px,#6a6a6a 8px,transparent 8px) 34.20px 0/4.8px 14px repeat-y,linear-gradient(#2c2c2c 13px,#1e1e1e 13px) 0 0/100% 14px repeat-y"></div>
<div style="left:592.05px;top:357px;width:44.4px;height:210px;background:linear-gradient(transparent 6px,#6a6a6a 6px,#6a6a6a 8px,transparent 8px) 4.30px 0/4.8px 14px repeat-y,linear-gradient(transparent 6px,#6a6a6a 6px,#6a6a6a 8px,transparent 8px) 19.30px 0/4.8px 14px repeat-y,linear-gradient(transparent 6px,#6a6a6a 6px,#6a6a6a 8px,transparent 8px) 34.30px 0/4.8px 14px repeat-y,linear-gradient(#2c2c2c 13px,#1e1e1e 13px) 0 0/100% 14px repeat-y"></div>
<div style="left:543.35px;top:343px;width:45px;height:13px;background:linear-gradient(#6a6a6a,#6a6a6a) 5.60px 6px/4.8px 2px no-repeat,linear-gradient(#6a6a6a,#6a6a6a) 12.00px 6px/4.8px 2px no-repeat,linear-gradient(#6a6a6a,#6a6a6a) 18.50px 6px/4.8px 2px no-repeat,linear-gradient(#6a6a6a,#6a6a6a) 34.20px 6px/4.8px 2px no-repeat,#4b3b1f"></div>
<div style="left:592.05px;top:343px;width:44.4px;height:13px;background:linear-gradient(#6a6a6a,#6a6a6a) 4.30px 6px/4.8px 2px no-repeat,linear-gradient(#6a6a6a,#6a6a6a) 19.30px 6px/4.8px 2px no-repeat,linear-gradient(#6a6a6a,#6a6a6a) 34.30px 6px/4.8px 2px no-repeat,#4b3b1f"></div>
<div style="left:543.35px;top:455px;width:45px;height:13px;background:linear-gradient(#6a6a6a,#6a6a6a) 5.60px 6px/4.8px 2px no-repeat,linear-gradient(#6a6a6a,#6a6a6a) 12.00px 6px/4.8px 2px no-repeat,linear-gradient(#6a6a6a,#6a6a6a) 18.50px 6px/4.8px 2px no-repeat,linear-gradient(#6a6a6a,#6a6a6a) 34.20px 6px/4.8px 2px no-repeat,#444444"></div>
<div style="left:592.05px;top:455px;width:44.4px;height:13px;background:linear-gradient(#6a6a6a,#6a6a6a) 4.30px 6px/4.8px 2px no-repeat,linear-gradient(#6a6a6a,#6a6a6a) 19.30px 6px/4.8px 2px no-repeat,linear-gradient(#6a6a6a,#6a6a6a) 34.30px 6px/4.8px 2px no-repeat,#444444"></div>
<div style="left:689.82px;top:341px;width:1.2px;height:241px;background:#2a2a2a;"></div>
<div style="left:644.02px;top:357px;width:45px;height:210px;background:linear-gradient(transparent 6px,#6a6a6a 6px,#6a6a6a 8px,transparent 8px) 5.60px 0/4.8px 14px repeat-y,linear-gradient(transparent 6px,#6a6a6a 6px,#6a6a6a 8px,transparent 8px) 12.00px 0/4.8px 14px repeat-y,linear-gradient(transparent 6px,#6a6a6a 6px,#6a6a6a 8px,transparent 8px) 18.50px 0/4.8px 14px repeat-y,linear-gradient(transparent 6px,#6a6a6a 6px,#6a6a6a 8px,transparent 8px) 34.20px 0/4.8px 14px repeat-y,linear-gradient(#2c2c2c 13px,#1e1e1e 13px) 0 0/100% 14px repeat-y"></div>
<div style="left:692.72px;top:357px;width:44.4px;height:210px;background:linear-gradient(transparent 6px,#6a6a6a 6px,#6a6a6a 8px,transparent 8px) 4.30px 0/4.8px 14px repeat-y,linear-gradient(transparent 6px,#6a6a6a 6px,#6a6a6a 8px,transparent 8px) 19.30px 0/4.8px 14px repeat-y,linear-gradient(transparent 6px,#6a6a6a 6px,#6a6a6a 8px,transparent 8px) 34.30px 0/4.8px 14px repeat-y,linear-gradient(#2c2c2c 13px,#1e1e1e 13px) 0 0/100% 14px repeat-y"></div>
<div style="left:644.02px;top:343px;width:45px;height:13px;background:linear-gradient(#6a6a6a,#6a6a6a) 5.60px 6px/4.8px 2px no-repeat,linear-gradient(#6a6a6a,#6a6a6a) 12.00px 6px/4.8px 2px no-repeat,linear-gradient(#6a6a6a,#6a6a6a) 18.50px 6px/4.8px 2px no-repeat,linear-gradient(#6a6a6a,#6a6a6a) 34.20px 6px/4.8px 2px no-repeat,#4b3b1f"></div>
<div style="left:692.72px;top:343px;width:44.4px;height:13px;background:linear-gradient(#6a6a6a,#6a6a6a) 4.30px 6px/4.8px 2px no-repeat,linear-gradient(#6a6a6a,#6a6a6a) 19.30px 6px/4.8px 2px no-repeat,linear-gradient(#6a6a6a,#6a6a6a) 34.30px 6px/4.8px 2px no-repeat,#4b3b1f"></div>
<div style="left:644.02px;top:455px;width:45px;height:13px;background:linear-gradient(#6a6a6a,#6a6a6a) 5.60px 6px/4.8px 2px no-repeat,linear-gradient(#6a6a6a,#6a6a6a) 12.00px 6px/4.8px 2px no-repeat,linear-gradient(#6a6a6a,#6a6a6a) 18.50px 6px/4.8px 2px no-repeat,linear-gradient(#6a6a6a,#6a6a6a) 34.20px 6px/4.8px 2px no-repeat,#444444"></div>
<div style="left:692.72px;top:455px;width:44.4px;height:13px;background:linear-gradient(#6a6a6a,#6a6a6a) 4.30px 6px/4.8px 2px no-repeat,linear-gradient(#6a6a6a,#6a6a6a) 19.30px 6px/4.8px 2px no-repeat,linear-gradient(#6a6a6a,#6a6a6a) 34.30px 6px/4.8px 2px no-repeat,#444444"></div>
<div style="left:790.49px;top:341px;width:1.2px;height:241px;background:#2a2a2a;"></div>
<div style="left:744.69px;top:357px;width:45px;height:210px;background:linear-gradient(transparent 6px,#6a6a6a 6px,#6a6a6a 8px,transparent 8px) 5.60px 0/4.8px 14px repeat-y,linear-gradient(transparent 6px,#6a6a6a 6px,#6a6a6a 8px,transparent 8px) 12.00px 0/4.8px 14px repeat-y,linear-gradient(transparent 6px,#6a6a6a 6px,#6a6a6a 8px,transparent 8px) 18.50px 0/4.8px 14px repeat-y,linear-gradient(transparent 6px,#6a6a6a 6px,#6a6a6a 8px,transparent 8px) 34.20px 0/4.8px 14px repeat-y,linear-gradient(#2c2c2c 13px,#1e1e1e 13px) 0 0/100% 14px repeat-y"></div>
<div style="left:793.39px;top:357px;width:44.4px;height:210px;background:linear-gradient(transparent 6px,#6a6a6a 6px,#6a6a6a 8px,transparent 8px) 4.30px 0/4.8px 14px repeat-y,linear-gradient(transparent 6px,#6a6a6a 6px,#6a6a6a 8px,transparent 8px) 19.30px 0/4.8px 14px repeat-y,linear-gradient(transparent 6px,#6a6a6a 6px,#6a6a6a 8px,transparent 8px) 34.30px 0/4.8px 14px repeat-y,linear-gradient(#2c2c2c 13px,#1e1e1e 13px) 0 0/100% 14px repeat-y"></div>
<div style="left:744.69px;top:343px;width:45px;height:13px;background:linear-gradient(#6a6a6a,#6a6a6a) 5.60px 6px/4.8px 2px no-repeat,linear-gradient(#6a6a6a,#6a6a6a) 12.00px 6px/4.8px 2px no-repeat,linear-gradient(#6a6a6a,#6a6a6a) 18.50px 6px/4.8px 2px no-repeat,linear-gradient(#6a6a6a,#6a6a6a) 34.20px 6px/4.8px 2px no-repeat,#4b3b1f"></div>
<div style="left:793.39px;top:343px;width:44.4px;height:13px;background:linear-gradient(#6a6a6a,#6a6a6a) 4.30px 6px/4.8px 2px no-repeat,linear-gradient(#6a6a6a,#6a6a6a) 19.30px 6px/4.8px 2px no-repeat,linear-gradient(#6a6a6a,#6a6a6a) 34.30px 6px/4.8px 2px no-repeat,#4b3b1f"></div>
<div style="left:744.69px;top:455px;width:45px;height:13px;background:linear-gradient(#6a6a6a,#6a6a6a) 5.60px 6px/4.8px 2px no-repeat,linear-gradient(#6a6a6a,#6a6a6a) 12.00px 6px/4.8px 2px no-repeat,linear-gradient(#6a6a6a,#6a6a6a) 18.50px 6px/4.8px 2px no-repeat,linear-gradient(#6a6a6a,#6a6a6a) 34.20px 6px/4.8px 2px no-repeat,#444444"></div>
<div style="left:793.39px;top:455px;width:44.4px;height:13px;background:linear-gradient(#6a6a6a,#6a6a6a) 4.30px 6px/4.8px 2px no-repeat,linear-gradient(#6a6a6a,#6a6a6a) 19.30px 6px/4.8px 2px no-repeat,linear-gradient(#6a6a6a,#6a6a6a) 34.30px 6px/4.8px 2px no-repeat,#444444"></div>
<div style="left:891.16px;top:341px;width:1.2px;height:241px;background:#2a2a2a;"></div>
<div style="left:845.36px;top:357px;width:45px;height:210px;background:linear-gradient(transparent 6px,#6a6a6a 6px,#6a6a6a 8px,transparent 8px) 5.60px 0/4.8px 14px repeat-y,linear-gradient(transparent 6px,#6a6a6a 6px,#6a6a6a 8px,transparent 8px) 12.00px 0/4.8px 14px repeat-y,linear-gradient(transparent 6px,#6a6a6a 6px,#6a6a6a 8px,transparent 8px) 18.50px 0/4.8px 14px repeat-y,linear-gradient(transparent 6px,#6a6a6a 6px,#6a6a6a 8px,transparent 8px) 34.20px 0/4.8px 14px repeat-y,linear-gradient(#2c2c2c 13px,#1e1e1e 13px) 0 0/100% 14px repeat-y"></div>
<div style="left:894.06px;top:357px;width:44.4px;height:210px;background:linear-gradient(transparent 6px,#6a6a6a 6px,#6a6a6a 8px,transparent 8px) 4.30px 0/4.8px 14px repeat-y,linear-gradient(transparent 6px,#6a6a6a 6px,#6a6a6a 8px,transparent 8px) 19.30px 0/4.8px 14px repeat-y,linear-gradient(transparent 6px,#6a6a6a 6px,#6a6a6a 8px,transparent 8px) 34.30px 0/4.8px 14px repeat-y,linear-gradient(#2c2c2c 13px,#1e1e1e 13px) 0 0/100% 14px repeat-y"></div>
<div style="left:845.36px;top:343px;width:45px;height:13px;background:linear-gradient(#6a6a6a,#6a6a6a) 5.60px 6px/4.8px 2px no-repeat,linear-gradient(#6a6a6a,#6a6a6a) 12.00px 6px/4.8px 2px no-repeat,linear-gradient(#6a6a6a,#6a6a6a) 18.50px 6px/4.8px 2px no-repeat,linear-gradient(#6a6a6a,#6a6a6a) 34.20px 6px/4.8px 2px no-repeat,#4b3b1f"></div>
<div style="left:894.06px;top:343px;width:44.4px;height:13px;background:linear-gradient(#6a6a6a,#6a6a6a) 4.30px 6px/4.8px 2px no-repeat,linear-gradient(#6a6a6a,#6a6a6a) 19.30px 6px/4.8px 2px no-repeat,linear-gradient(#6a6a6a,#6a6a6a) 34.30px 6px/4.8px 2px no-repeat,#4b3b1f"></div>
<div style="left:845.36px;top:455px;width:45px;height:13px;background:linear-gradient(#6a6a6a,#6a6a6a) 5.60px 6px/4.8px 2px no-repeat,linear-gradient(#6a6a6a,#6a6a6a) 12.00px 6px/4.8px 2px no-repeat,linear-gradient(#6a6a6a,#6a6a6a) 18.50px 6px/4.8px 2px no-repeat,linear-gradient(#6a6a6a,#6a6a6a) 34.20px 6px/4.8px 2px no-repeat,#444444"></div>
<div style="left:894.06px;top:455px;width:44.4px;height:13px;background:linear-gradient(#6a6a6a,#6a6a6a) 4.30px 6px/4.8px 2px no-repeat,linear-gradient(#6a6a6a,#6a6a6a) 19.30px 6px/4.8px 2px no-repeat,linear-gradient(#6a6a6a,#6a6a6a) 34.30px 6px/4.8px 2px no-repeat,#444444"></div>
<div style="left:991.83px;top:341px;width:1.2px;height:241px;background:#2a2a2a;"></div>
<div style="left:946.03px;top:357px;width:45px;height:210px;background:linear-gradient(transparent 6px,#6a6a6a 6px,#6a6a6a 8px,transparent 8px) 5.60px 0/4.8px 14px repeat-y,linear-gradient(transparent 6px,#6a6a6a 6px,#6a6a6a 8px,transparent 8px) 12.00px 0/4.8px 14px repeat-y,linear-gradient(transparent 6px,#6a6a6a 6px,#6a6a6a 8px,transparent 8px) 18.50px 0/4.8px 14px repeat-y,linear-gradient(transparent 6px,#6a6a6a 6px,#6a6a6a 8px,transparent 8px) 34.20px 0/4.8px 14px repeat-y,linear-gradient(#2c2c2c 13px,#1e1e1e 13px) 0 0/100% 14px repeat-y"></div>
<div style="left:994.73px;top:357px;width:44.4px;height:210px;background:linear-gradient(transparent 6px,#6a6a6a 6px,#6a6a6a 8px,transparent 8px) 4.30px 0/4.8px 14px repeat-y,linear-gradient(transparent 6px,#6a6a6a 6px,#6a6a6a 8px,transparent 8px) 19.30px 0/4.8px 14px repeat-y,linear-gradient(transparent 6px,#6a6a6a 6px,#6a6a6a 8px,transparent 8px) 34.30px 0/4.8px 14px repeat-y,linear-gradient(#2c2c2c 13px,#1e1e1e 13px) 0 0/100% 14px repeat-y"></div>
<div style="left:946.03px;top:343px;width:45px;height:13px;background:linear-gradient(#6a6a6a,#6a6a6a) 5.60px 6px/4.8px 2px no-repeat,linear-gradient(#6a6a6a,#6a6a6a) 12.00px 6px/4.8px 2px no-repeat,linear-gradient(#6a6a6a,#6a6a6a) 18.50px 6px/4.8px 2px no-repeat,linear-gradient(#6a6a6a,#6a6a6a) 34.20px 6px/4.8px 2px no-repeat,#4b3b1f"></div>
<div style="left:994.73px;top:343px;width:44.4px;height:13px;background:linear-gradient(#6a6a6a,#6a6a6a) 4.30px 6px/4.8px 2px no-repeat,linear-gradient(#6a6a6a,#6a6a6a) 19.30px 6px/4.8px 2px no-repeat,linear-gradient(#6a6a6a,#6a6a6a) 34.30px 6px/4.8px 2px no-repeat,#4b3b1f"></div>
<div style="left:946.03px;top:455px;width:45px;height:13px;background:linear-gradient(#6a6a6a,#6a6a6a) 5.60px 6px/4.8px 2px no-repeat,linear-gradient(#6a6a6a,#6a6a6a) 12.00px 6px/4.8px 2px no-repeat,linear-gradient(#6a6a6a,#6a6a6a) 18.50px 6px/4.8px 2px no-repeat,linear-gradient(#6a6a6a,#6a6a6a) 34.20px 6px/4.8px 2px no-repeat,#444444"></div>
<div style="left:994.73px;top:455px;width:44.4px;height:13px;background:linear-gradient(#6a6a6a,#6a6a6a) 4.30px 6px/4.8px 2px no-repeat,linear-gradient(#6a6a6a,#6a6a6a) 19.30px 6px/4.8px 2px no-repeat,linear-gradient(#6a6a6a,#6a6a6a) 34.30px 6px/4.8px 2px no-repeat,#444444"></div>
<svg style="left:0px;top:0px" width="1024" height="594" viewBox="0 0 1024 594"><rect x="61.4" y="509.5" width="901.8000000000001" height="55.5" fill="#6a6a6a"/><rect x="62.3" y="510.7" width="900.1000000000001" height="52.5" fill="#eeeeee"/><rect x="75.73" y="510.5" width="2" height="53" fill="#000"/><rect x="91.56" y="510.5" width="2" height="53" fill="#000"/><rect x="107.39" y="510.5" width="2" height="53" fill="#000"/><rect x="123.22" y="510.5" width="2" height="53" fill="#000"/><rect x="139.05" y="510.5" width="2" height="53" fill="#000"/><rect x="154.88" y="510.5" width="2" height="53" fill="#000"/><rect x="170.71" y="510.5" width="2" height="53" fill="#000"/><rect x="186.54" y="510.5" width="2" height="53" fill="#000"/><rect x="202.37" y="510.5" width="2" height="53" fill="#000"/><rect x="218.20" y="510.5" width="2" height="53" fill="#000"/><rect x="234.03" y="510.5" width="2" height="53" fill="#000"/><rect x="249.86" y="510.5" width="2" height="53" fill="#000"/><rect x="265.69" y="510.5" width="2" height="53" fill="#000"/><rect x="281.52" y="510.5" width="2" height="53" fill="#000"/><rect x="297.35" y="510.5" width="2" height="53" fill="#000"/><rect x="313.18" y="510.5" width="2" height="53" fill="#000"/><rect x="329.01" y="510.5" width="2" height="53" fill="#000"/><rect x="344.84" y="510.5" width="2" height="53" fill="#000"/><rect x="360.67" y="510.5" width="2" height="53" fill="#000"/><rect x="376.50" y="510.5" width="2" height="53" fill="#000"/><rect x="392.33" y="510.5" width="2" height="53" fill="#000"/><rect x="408.16" y="510.5" width="2" height="53" fill="#000"/><rect x="423.99" y="510.5" width="2" height="53" fill="#000"/><rect x="439.82" y="510.5" width="2" height="53" fill="#000"/><rect x="455.65" y="510.5" width="2" height="53" fill="#000"/><rect x="471.48" y="510.5" width="2" height="53" fill="#000"/><rect x="487.31" y="510.5" width="2" height="53" fill="#000"/><rect x="503.14" y="510.5" width="2" height="53" fill="#000"/><rect x="518.97" y="510.5" width="2" height="53" fill="#000"/><rect x="534.80" y="510.5" width="2" height="53" fill="#000"/><rect x="550.63" y="510.5" width="2" height="53" fill="#000"/><rect x="566.46" y="510.5" width="2" height="53" fill="#000"/><rect x="582.29" y="510.5" width="2" height="53" fill="#000"/><rect x="598.12" y="510.5" width="2" height="53" fill="#000"/><rect x="613.95" y="510.5" width="2" height="53" fill="#000"/><rect x="629.78" y="510.5" width="2" height="53" fill="#000"/><rect x="645.61" y="510.5" width="2" height="53" fill="#000"/><rect x="661.44" y="510.5" width="2" height="53" fill="#000"/><rect x="677.27" y="510.5" width="2" height="53" fill="#000"/><rect x="693.10" y="510.5" width="2" height="53" fill="#000"/><rect x="708.93" y="510.5" width="2" height="53" fill="#000"/><rect x="724.76" y="510.5" width="2" height="53" fill="#000"/><rect x="740.59" y="510.5" width="2" height="53" fill="#000"/><rect x="756.42" y="510.5" width="2" height="53" fill="#000"/><rect x="772.25" y="510.5" width="2" height="53" fill="#000"/><rect x="788.08" y="510.5" width="2" height="53" fill="#000"/><rect x="803.91" y="510.5" width="2" height="53" fill="#000"/><rect x="819.74" y="510.5" width="2" height="53" fill="#000"/><rect x="835.57" y="510.5" width="2" height="53" fill="#000"/><rect x="851.40" y="510.5" width="2" height="53" fill="#000"/><rect x="867.23" y="510.5" width="2" height="53" fill="#000"/><rect x="883.06" y="510.5" width="2" height="53" fill="#000"/><rect x="898.89" y="510.5" width="2" height="53" fill="#000"/><rect x="914.72" y="510.5" width="2" height="53" fill="#000"/><rect x="930.55" y="510.5" width="2" height="53" fill="#000"/><rect x="946.38" y="510.5" width="2" height="53" fill="#000"/><rect x="73.23" y="510.7" width="7" height="34" fill="#000"/><rect x="89.06" y="510.7" width="7" height="34" fill="#000"/><rect x="120.72" y="510.7" width="7" height="34" fill="#000"/><rect x="136.55" y="510.7" width="7" height="34" fill="#000"/><rect x="152.38" y="510.7" width="7" height="34" fill="#000"/><rect x="184.04" y="510.7" width="7" height="34" fill="#000"/><rect x="199.87" y="510.7" width="7" height="34" fill="#000"/><rect x="231.53" y="510.7" width="7" height="34" fill="#000"/><rect x="247.36" y="510.7" width="7" height="34" fill="#000"/><rect x="263.19" y="510.7" width="7" height="34" fill="#000"/><rect x="294.85" y="510.7" width="7" height="34" fill="#000"/><rect x="310.68" y="510.7" width="7" height="34" fill="#000"/><rect x="342.34" y="510.7" width="7" height="34" fill="#000"/><rect x="358.17" y="510.7" width="7" height="34" fill="#000"/><rect x="374.00" y="510.7" width="7" height="34" fill="#000"/><rect x="405.66" y="510.7" width="7" height="34" fill="#000"/><rect x="421.49" y="510.7" width="7" height="34" fill="#000"/><rect x="453.15" y="510.7" width="7" height="34" fill="#000"/><rect x="468.98" y="510.7" width="7" height="34" fill="#000"/><rect x="484.81" y="510.7" width="7" height="34" fill="#000"/><rect x="516.47" y="510.7" width="7" height="34" fill="#000"/><rect x="532.30" y="510.7" width="7" height="34" fill="#000"/><rect x="563.96" y="510.7" width="7" height="34" fill="#000"/><rect x="579.79" y="510.7" width="7" height="34" fill="#000"/><rect x="595.62" y="510.7" width="7" height="34" fill="#000"/><rect x="627.28" y="510.7" width="7" height="34" fill="#000"/><rect x="643.11" y="510.7" width="7" height="34" fill="#000"/><rect x="674.77" y="510.7" width="7" height="34" fill="#000"/><rect x="690.60" y="510.7" width="7" height="34" fill="#000"/><rect x="706.43" y="510.7" width="7" height="34" fill="#000"/><rect x="738.09" y="510.7" width="7" height="34" fill="#000"/><rect x="753.92" y="510.7" width="7" height="34" fill="#000"/><rect x="785.58" y="510.7" width="7" height="34" fill="#000"/><rect x="801.41" y="510.7" width="7" height="34" fill="#000"/><rect x="817.24" y="510.7" width="7" height="34" fill="#000"/><rect x="848.90" y="510.7" width="7" height="34" fill="#000"/><rect x="864.73" y="510.7" width="7" height="34" fill="#000"/><rect x="896.39" y="510.7" width="7" height="34" fill="#000"/><rect x="912.22" y="510.7" width="7" height="34" fill="#000"/><rect x="928.05" y="510.7" width="7" height="34" fill="#000"/></svg>
<div class="t" style="left:506px;top:553.95px;font-size:10px;line-height:11.5px;color:#3a3a3a;letter-spacing:0.4px;font-family:"Liberation Sans", sans-serif;">c4</div>
<div style="left:1px;top:565px;width:1011px;height:17px;background:#121212;"></div>
<div style="left:1px;top:565px;width:39px;height:17px;background:#0a0a0a;"></div>
<div class="t" style="left:8.75px;top:568.34px;font-size:12px;line-height:13.8px;color:#7a3030;letter-spacing:0.75px">016</div>
<div style="left:40.00px;top:566px;width:45px;height:14px;background:linear-gradient(#5a4444,#5a4444) 5.60px 6px/4.8px 2px no-repeat,linear-gradient(#5a4444,#5a4444) 12.00px 6px/4.8px 2px no-repeat,linear-gradient(#5a4444,#5a4444) 18.50px 6px/4.8px 2px no-repeat,linear-gradient(#5a4444,#5a4444) 34.20px 6px/4.8px 2px no-repeat,#2a1818"></div>
<div style="left:88.70px;top:566px;width:44.4px;height:14px;background:linear-gradient(#5a4444,#5a4444) 4.30px 6px/4.8px 2px no-repeat,linear-gradient(#5a4444,#5a4444) 19.30px 6px/4.8px 2px no-repeat,linear-gradient(#5a4444,#5a4444) 34.30px 6px/4.8px 2px no-repeat,#2a1818"></div>
<div style="left:140.67px;top:566px;width:45px;height:14px;background:linear-gradient(#5a4444,#5a4444) 5.60px 6px/4.8px 2px no-repeat,linear-gradient(#5a4444,#5a4444) 12.00px 6px/4.8px 2px no-repeat,linear-gradient(#5a4444,#5a4444) 18.50px 6px/4.8px 2px no-repeat,linear-gradient(#5a4444,#5a4444) 34.20px 6px/4.8px 2px no-repeat,#2a1818"></div>
<div style="left:189.37px;top:566px;width:44.4px;height:14px;background:linear-gradient(#5a4444,#5a4444) 4.30px 6px/4.8px 2px no-repeat,linear-gradient(#5a4444,#5a4444) 19.30px 6px/4.8px 2px no-repeat,linear-gradient(#5a4444,#5a4444) 34.30px 6px/4.8px 2px no-repeat,#2a1818"></div>
<div style="left:241.34px;top:566px;width:45px;height:14px;background:linear-gradient(#5a4444,#5a4444) 5.60px 6px/4.8px 2px no-repeat,linear-gradient(#5a4444,#5a4444) 12.00px 6px/4.8px 2px no-repeat,linear-gradient(#5a4444,#5a4444) 18.50px 6px/4.8px 2px no-repeat,linear-gradient(#5a4444,#5a4444) 34.20px 6px/4.8px 2px no-repeat,#2a1818"></div>
<div style="left:290.04px;top:566px;width:44.4px;height:14px;background:linear-gradient(#5a4444,#5a4444) 4.30px 6px/4.8px 2px no-repeat,linear-gradient(#5a4444,#5a4444) 19.30px 6px/4.8px 2px no-repeat,linear-gradient(#5a4444,#5a4444) 34.30px 6px/4.8px 2px no-repeat,#2a1818"></div>
<div style="left:342.01px;top:566px;width:45px;height:14px;background:linear-gradient(#5a4444,#5a4444) 5.60px 6px/4.8px 2px no-repeat,linear-gradient(#5a4444,#5a4444) 12.00px 6px/4.8px 2px no-repeat,linear-gradient(#5a4444,#5a4444) 18.50px 6px/4.8px 2px no-repeat,linear-gradient(#5a4444,#5a4444) 34.20px 6px/4.8px 2px no-repeat,#2a1818"></div>
<div style="left:390.71px;top:566px;width:44.4px;height:14px;background:linear-gradient(#5a4444,#5a4444) 4.30px 6px/4.8px 2px no-repeat,linear-gradient(#5a4444,#5a4444) 19.30px 6px/4.8px 2px no-repeat,linear-gradient(#5a4444,#5a4444) 34.30px 6px/4.8px 2px no-repeat,#2a1818"></div>
<div style="left:442.68px;top:566px;width:45px;height:14px;background:linear-gradient(#5a4444,#5a4444) 5.60px 6px/4.8px 2px no-repeat,linear-gradient(#5a4444,#5a4444) 12.00px 6px/4.8px 2px no-repeat,linear-gradient(#5a4444,#5a4444) 18.50px 6px/4.8px 2px no-repeat,linear-gradient(#5a4444,#5a4444) 34.20px 6px/4.8px 2px no-repeat,#2a1818"></div>
<div style="left:491.38px;top:566px;width:44.4px;height:14px;background:linear-gradient(#5a4444,#5a4444) 4.30px 6px/4.8px 2px no-repeat,linear-gradient(#5a4444,#5a4444) 19.30px 6px/4.8px 2px no-repeat,linear-gradient(#5a4444,#5a4444) 34.30px 6px/4.8px 2px no-repeat,#2a1818"></div>
<div style="left:543.35px;top:566px;width:45px;height:14px;background:linear-gradient(#5a4444,#5a4444) 5.60px 6px/4.8px 2px no-repeat,linear-gradient(#5a4444,#5a4444) 12.00px 6px/4.8px 2px no-repeat,linear-gradient(#5a4444,#5a4444) 18.50px 6px/4.8px 2px no-repeat,linear-gradient(#5a4444,#5a4444) 34.20px 6px/4.8px 2px no-repeat,#2a1818"></div>
<div style="left:592.05px;top:566px;width:44.4px;height:14px;background:linear-gradient(#5a4444,#5a4444) 4.30px 6px/4.8px 2px no-repeat,linear-gradient(#5a4444,#5a4444) 19.30px 6px/4.8px 2px no-repeat,linear-gradient(#5a4444,#5a4444) 34.30px 6px/4.8px 2px no-repeat,#2a1818"></div>
<div style="left:644.02px;top:566px;width:45px;height:14px;background:linear-gradient(#5a4444,#5a4444) 5.60px 6px/4.8px 2px no-repeat,linear-gradient(#5a4444,#5a4444) 12.00px 6px/4.8px 2px no-repeat,linear-gradient(#5a4444,#5a4444) 18.50px 6px/4.8px 2px no-repeat,linear-gradient(#5a4444,#5a4444) 34.20px 6px/4.8px 2px no-repeat,#2a1818"></div>
<div style="left:692.72px;top:566px;width:44.4px;height:14px;background:linear-gradient(#5a4444,#5a4444) 4.30px 6px/4.8px 2px no-repeat,linear-gradient(#5a4444,#5a4444) 19.30px 6px/4.8px 2px no-repeat,linear-gradient(#5a4444,#5a4444) 34.30px 6px/4.8px 2px no-repeat,#2a1818"></div>
<div style="left:744.69px;top:566px;width:45px;height:14px;background:linear-gradient(#5a4444,#5a4444) 5.60px 6px/4.8px 2px no-repeat,linear-gradient(#5a4444,#5a4444) 12.00px 6px/4.8px 2px no-repeat,linear-gradient(#5a4444,#5a4444) 18.50px 6px/4.8px 2px no-repeat,linear-gradient(#5a4444,#5a4444) 34.20px 6px/4.8px 2px no-repeat,#2a1818"></div>
<div style="left:793.39px;top:566px;width:44.4px;height:14px;background:linear-gradient(#5a4444,#5a4444) 4.30px 6px/4.8px 2px no-repeat,linear-gradient(#5a4444,#5a4444) 19.30px 6px/4.8px 2px no-repeat,linear-gradient(#5a4444,#5a4444) 34.30px 6px/4.8px 2px no-repeat,#2a1818"></div>
<div style="left:845.36px;top:566px;width:45px;height:14px;background:linear-gradient(#5a4444,#5a4444) 5.60px 6px/4.8px 2px no-repeat,linear-gradient(#5a4444,#5a4444) 12.00px 6px/4.8px 2px no-repeat,linear-gradient(#5a4444,#5a4444) 18.50px 6px/4.8px 2px no-repeat,linear-gradient(#5a4444,#5a4444) 34.20px 6px/4.8px 2px no-repeat,#2a1818"></div>
<div style="left:894.06px;top:566px;width:44.4px;height:14px;background:linear-gradient(#5a4444,#5a4444) 4.30px 6px/4.8px 2px no-repeat,linear-gradient(#5a4444,#5a4444) 19.30px 6px/4.8px 2px no-repeat,linear-gradient(#5a4444,#5a4444) 34.30px 6px/4.8px 2px no-repeat,#2a1818"></div>
<div style="left:946.03px;top:566px;width:45px;height:14px;background:linear-gradient(#5a4444,#5a4444) 5.60px 6px/4.8px 2px no-repeat,linear-gradient(#5a4444,#5a4444) 12.00px 6px/4.8px 2px no-repeat,linear-gradient(#5a4444,#5a4444) 18.50px 6px/4.8px 2px no-repeat,linear-gradient(#5a4444,#5a4444) 34.20px 6px/4.8px 2px no-repeat,#2a1818"></div>
<div style="left:994.73px;top:566px;width:44.4px;height:14px;background:linear-gradient(#5a4444,#5a4444) 4.30px 6px/4.8px 2px no-repeat,linear-gradient(#5a4444,#5a4444) 19.30px 6px/4.8px 2px no-repeat,linear-gradient(#5a4444,#5a4444) 34.30px 6px/4.8px 2px no-repeat,#2a1818"></div>
<div class="t" style="left:4.3px;top:568.94px;font-size:12px;line-height:13.8px;color:#cccccc;letter-spacing:0.95px;font-family:"Liberation Sans", sans-serif;">Module: Untitled</div>
<div class="t" style="left:931px;top:568.94px;font-size:12px;line-height:13.8px;color:#cccccc;letter-spacing:0.45px;font-family:"Liberation Sans", sans-serif;">150.00 BPM</div>
<div style="left:1012px;top:250px;width:11px;height:332px;background:#808080;"></div>
<div style="left:1012px;top:278px;width:11px;height:5.3px;background:#ffffff;"></div>
<div style="left:1px;top:582px;width:1022px;height:10px;background:#878787;border-radius:0 0 6px 6px"></div>
<div style="left:1px;top:582px;width:3.5px;height:10px;background:#f4f4f4;border-radius:0 0 0 6px"></div>
<div style="left:5px;top:40px;width:160px;height:27px;background:#2b2b2b;border:5px solid #e81c24"></div>
<div class="t" style="left:15.5px;top:46.89px;font-size:12px;line-height:13.8px;color:#1ac41a;letter-spacing:0.6px;font-family:"Liberation Sans", sans-serif;">System: SEGA Genesis</div>
</body></html>
